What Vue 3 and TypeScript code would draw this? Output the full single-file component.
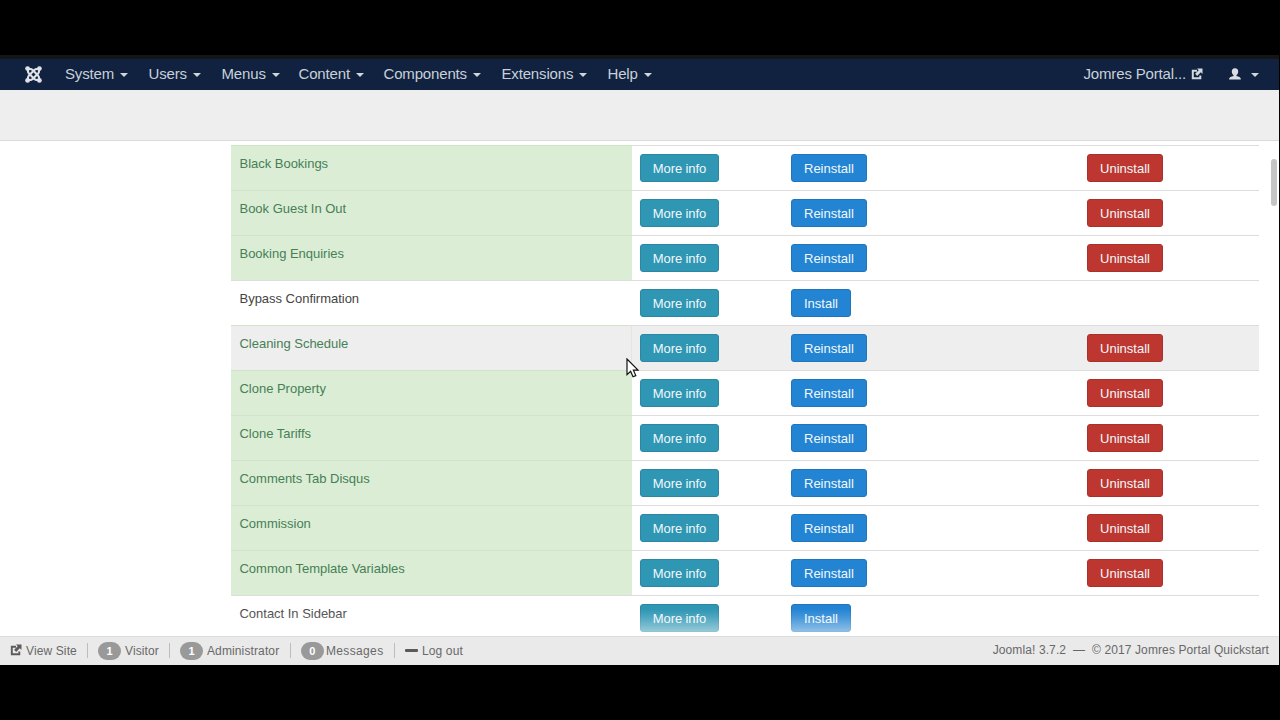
<script setup lang="ts">
interface Plugin {
  name: string
  installed: boolean
  hovered?: boolean
}

const menus: string[] = ['System', 'Users', 'Menus', 'Content', 'Components', 'Extensions', 'Help']

const plugins: Plugin[] = [
  { name: 'Black Bookings', installed: true },
  { name: 'Book Guest In Out', installed: true },
  { name: 'Booking Enquiries', installed: true },
  { name: 'Bypass Confirmation', installed: false },
  { name: 'Cleaning Schedule', installed: true, hovered: true },
  { name: 'Clone Property', installed: true },
  { name: 'Clone Tariffs', installed: true },
  { name: 'Comments Tab Disqus', installed: true },
  { name: 'Commission', installed: true },
  { name: 'Common Template Variables', installed: true },
  { name: 'Contact In Sidebar', installed: false },
]

const counters = [
  { count: 1, label: 'Visitor', kind: 'visitor' },
  { count: 1, label: 'Administrator', kind: 'admin' },
  { count: 0, label: 'Messages', kind: 'messages' },
]
</script>

<template>
  <div class="screen">
    <div class="window">
      <nav class="navbar">
        <svg class="logo" viewBox="0 0 17 17">
          <g fill="none" stroke="#dfe3e8" stroke-width="2.1">
            <path d="M3 3V5.2Q3 6.6 4 7.6L9.4 13Q10.4 14 11.8 14H14" />
            <path d="M14 3V5.2Q14 6.6 13 7.6L7.6 13Q6.6 14 5.2 14H3" />
            <path d="M3 14V11.8Q3 10.4 4 9.4L9.4 4Q10.4 3 11.8 3H14" />
            <path d="M14 14V11.8Q14 10.4 13 9.4L7.6 4Q6.6 3 5.2 3H3" />
          </g>
          <g fill="#dfe3e8">
            <circle cx="2.6" cy="2.6" r="2.4" /><circle cx="14.4" cy="2.6" r="2.4" />
            <circle cx="2.6" cy="14.4" r="2.4" /><circle cx="14.4" cy="14.4" r="2.4" />
          </g>
        </svg>
        <div class="menus">
          <a v-for="menu in menus" :key="menu" class="menu">{{ menu }}<i class="caret"></i></a>
        </div>
        <a class="site">Jomres Portal...</a>
        <svg class="ext" viewBox="0 0 12 12">
          <path d="M6 2.7H1.8V10.3H9.3V7.5" fill="none" stroke="#d3d9e0" stroke-width="2" />
          <path d="M6 0.5H11.5V6L9.8 4.3L6.2 7.9L4.1 5.8L7.7 2.2Z" fill="#d3d9e0" />
        </svg>
        <svg class="user" viewBox="0 0 12 12">
          <path d="M6 0.3C8.3 .3 9.2 1.8 9.2 3.6C9.2 5.3 8.4 6.5 7.5 7.1V8C9.5 8.7 11.9 9 11.9 11.6H.1C.1 9 2.5 8.7 4.5 8V7.1C3.6 6.5 2.8 5.3 2.8 3.6C2.8 1.8 3.7 .3 6 .3Z" fill="#d9dde2" />
        </svg>
        <i class="caret user-caret"></i>
      </nav>
      <div class="subhead"></div>

      <main class="content">
        <div class="table">
          <div
            v-for="p in plugins"
            :key="p.name"
            class="row"
            :class="{ installed: p.installed, hovered: p.hovered }"
          >
            <div class="name">{{ p.name }}</div>
            <div class="cell"><button class="btn info">More info</button></div>
            <div class="cell">
              <button class="btn primary">{{ p.installed ? 'Reinstall' : 'Install' }}</button>
            </div>
            <div class="cell"><button v-if="p.installed" class="btn danger">Uninstall</button></div>
          </div>
        </div>
        <div class="fade"></div>
        <div class="scrollbar"></div>
        <svg class="cursor" viewBox="0 0 13 20">
          <path d="M1 1V16.6L4.6 13.3L7 18.8L9.8 17.6L7.4 12.2H12Z" fill="#fff" stroke="#111" stroke-width="1.2" />
        </svg>
      </main>

      <footer class="status">
        <svg class="view-icon" viewBox="0 0 12 12">
          <path d="M6 2.7H1.8V10.3H9.3V7.5" fill="none" stroke="#5b5b5b" stroke-width="1.9" />
          <path d="M6 0.5H11.5V6L9.8 4.3L6.2 7.9L4.1 5.8L7.7 2.2Z" fill="#5b5b5b" />
        </svg>
        <span class="view">View Site</span>
        <div v-for="c in counters" :key="c.kind" class="counter" :class="c.kind">
          <span class="badge">{{ c.count }}</span>
          <span>{{ c.label }}</span>
        </div>
        <div class="logout"><i class="dash"></i><span>Log out</span></div>
        <span class="copyright">Joomla! 3.7.2 &nbsp;—&nbsp; © 2017 Jomres Portal Quickstart</span>
      </footer>
    </div>
  </div>
</template>

<style>
body {
  margin: 0;
  background: #000;
}
</style>

<style scoped>
* {
  box-sizing: border-box;
}
.screen {
  width: 1280px;
  height: 720px;
  padding-top: 55px;
  background: #000;
  overflow: hidden;
  font-family: "Liberation Sans", Arial, sans-serif;
}
.window {
  width: 1279px;
  height: 610px;
  display: flex;
  flex-direction: column;
  border-top: 4px solid #151515;
}
.navbar {
  height: 31px;
  flex: none;
  display: flex;
  align-items: center;
  padding-bottom: 2px;
  background: #10223f;
  color: #c9d0d9;
  font-size: 15px;
  letter-spacing: -0.16px;
  line-height: 28px;
}
.logo {
  width: 17px;
  height: 17px;
  margin: 1px 23px 0 25px;
  flex: none;
}
.logo,
.ext,
.user {
  display: block;
}
.menus {
  display: grid;
  grid-template-columns: 83.5px 73px 77px 85px 118px 106px 60px;
}
.menu {
  display: flex;
  align-items: center;
  white-space: nowrap;
}
.caret {
  width: 0;
  height: 0;
  margin: 3px 0 0 6px;
  border: 4px solid transparent;
  border-top-color: #d0d6dd;
  border-bottom: 0;
}
.site {
  margin-left: auto;
}
.ext {
  width: 12px;
  height: 12px;
  margin: 1px 26px 0 5px;
}
.user {
  width: 12px;
  height: 12px;
  margin-right: 6px;
}
.user-caret {
  margin: 3px 20px 0 4px;
}
.subhead {
  height: 51px;
  flex: none;
  background: #eee;
  border-bottom: 1px solid #dadada;
}
.content {
  position: relative;
  height: 495px;
  flex: none;
  overflow: hidden;
  background: #fff;
  padding: 4px 20px 0 231px;
}
.row {
  display: grid;
  grid-template-columns: 401px 151px 296px 1fr;
  height: 45px;
  border-top: 1px solid #ddd;
}
.name {
  padding: 9px 8px 0 8.5px;
  margin-top: -1px;
  border-top: 1px solid #ddd;
  font-size: 13px;
  line-height: 18px;
  letter-spacing: -0.02px;
  color: #444;
}
.installed .name {
  background: #dcedd5;
  border-top-color: #d0e5c8;
  color: #468055;
}
.installed.hovered,
.installed.hovered .name {
  background: #eee;
}
.hovered .name {
  border-right: 1px solid #e2e6df;
}
.cell {
  padding: 8px 0 0 8px;
}
.btn {
  display: block;
  height: 28px;
  padding: 1px 12px 0;
  border: 1px solid;
  border-radius: 3px;
  color: #f2f8fb;
  font: 13px/26px "Liberation Sans", Arial, sans-serif;
  white-space: nowrap;
}
.info {
  width: 79px;
  padding: 1px 0 0;
  background: #2f96b4;
  border-color: #2b87a2;
  letter-spacing: -0.1px;
}
.primary {
  background: #2384d3;
  border-color: #2076bd;
}
.danger {
  width: 76px;
  background: #bd362f;
  border-color: #aa312a;
}
.fade {
  position: absolute;
  left: 0;
  right: 0;
  bottom: 0;
  height: 27px;
  background: linear-gradient(rgba(255, 255, 255, 0), rgba(255, 255, 255, 0.15) 30%, rgba(255, 255, 255, 0.6));
}
.scrollbar {
  position: absolute;
  top: 18px;
  right: 2px;
  width: 6px;
  height: 47px;
  border-radius: 3px;
  background: #c5c5c5;
}
.cursor {
  position: absolute;
  left: 626px;
  top: 217px;
  width: 13px;
  height: 20px;
}
.status {
  height: 28.5px;
  flex: none;
  display: flex;
  align-items: center;
  background: #eaeaea;
  border-top: 1px solid #dcdcdc;
  color: #686868;
  font-size: 12px;
  letter-spacing: 0.12px;
  white-space: nowrap;
  line-height: 28px;
}
.view-icon {
  width: 12px;
  height: 12px;
  margin: 0 4px 1px 10px;
}
.view {
  width: 61px;
}
.counter,
.logout {
  display: flex;
  align-items: center;
}
.counter::before,
.logout::before {
  content: "";
  width: 1px;
  height: 15px;
  margin-right: 10px;
  background: #bdbdbd;
}
.visitor {
  width: 82px;
}
.admin {
  width: 121px;
}
.messages {
  width: 104px;
  letter-spacing: 0.35px;
}
.badge {
  width: 23px;
  height: 18px;
  margin-right: 4px;
  border-radius: 9px;
  background: #999;
  color: #fff;
  font-size: 11px;
  font-weight: bold;
  line-height: 18px;
  text-align: center;
}
.messages .badge {
  margin-right: 2px;
}
.dash {
  width: 13px;
  height: 3px;
  margin: 0 4px 1px 0;
  border-radius: 1px;
  background: #5b5b5b;
}
.copyright {
  margin-left: auto;
  padding-right: 10px;
  margin-top: -1px;
  letter-spacing: 0.11px;
}
</style>
